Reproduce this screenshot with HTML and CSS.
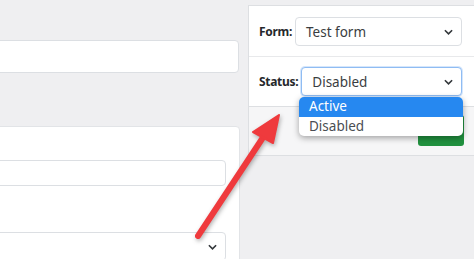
FILE: index.html
```html
<!DOCTYPE html>
<html lang="en">
<head>
    <meta charset="UTF-8">
    <meta name="viewport" content="width=device-width, initial-scale=1.0">
    <title>Form status</title>
    <link rel="stylesheet" href="styles.css">
</head>
<body>
    <div class="page">
        <!-- left side, cut off by the screenshot -->
        <div class="left-col">
            <input class="field top-field" type="text">
            <div class="card">
                <input class="field card-field" type="text">
                <div class="select card-select">
                    <span></span>
                    <svg class="chev" viewBox="0 0 10 6"><path d="M1 1l4 4 4-4"/></svg>
                </div>
            </div>
        </div>

        <!-- settings panel -->
        <div class="panel">
            <div class="row">
                <label>Form:</label>
                <div class="select">
                    <span>Test form</span>
                    <svg class="chev" viewBox="0 0 10 6"><path d="M1 1l4 4 4-4"/></svg>
                </div>
            </div>
            <div class="row status-row">
                <label>Status:</label>
                <div class="select focused">
                    <span>Disabled</span>
                    <svg class="chev" viewBox="0 0 10 6"><path d="M1 1l4 4 4-4"/></svg>
                </div>
                <ul class="options">
                    <li class="active">Active</li>
                    <li>Disabled</li>
                </ul>
            </div>
            <div class="panel-footer">
                <button class="save">Save</button>
            </div>
        </div>
    </div>

    <!-- red annotation arrow -->
    <svg class="arrow" width="474" height="259" viewBox="0 0 474 259">
        <line x1="198" y1="236" x2="262" y2="139" />
        <polygon points="279,115 253,132 273,143" />
    </svg>
</body>
</html>
```

FILE: styles.css
```css
body{
    margin: 0;
    background-color: #efeff1;
    font-family: "Noto Sans", "Open Sans", sans-serif;
    overflow: hidden;
    height: 259px;
}
.page{
    display: flex;
    gap: 8px;
}
.left-col{
    width: 240px;
    flex-shrink: 0;
    display: flex;
    flex-direction: column;
    padding-top: 40px;
}
.field{
    display: block;
    box-sizing: border-box;
    border: 1px solid #dcdfe3;
    border-radius: 4px;
    background: #fff;
    padding: 0;
}
.top-field{
    margin-left: -20px;
    width: 259px;
    height: 33px;
}
.card{
    margin-top: 53px;
    margin-left: -20px;
    background: #fff;
    border: 1px solid #e2e4e7;
    border-radius: 4px;
    padding: 33px 15px 0 0;
    height: 200px;
}
.card-field{
    width: 245px;
    height: 26px;
}
.select{
    box-sizing: border-box;
    height: 29px;
    flex: 1;
    display: flex;
    align-items: center;
    justify-content: space-between;
    border: 1px solid #dcdfe3;
    border-radius: 4px;
    background: #fff;
    padding: 0 8px 0 10px;
    font-size: 13.5px;
    color: #3a3d41;
}
.card-select{
    margin-top: 46px;
    width: 245px;
}
.chev{
    width: 9px;
    height: 6px;
    fill: none;
    stroke: #33373b;
    stroke-width: 1.8;
}
.panel{
    flex: 1;
    margin-top: 5px;
    align-self: flex-start;
    background: #fff;
    border: 1px solid #dddfe2;
    border-right: none;
}
.row{
    display: flex;
    align-items: center;
    gap: 3px;
    padding: 11px 12px 10px 10px;
    border-bottom: 1px solid #e8e9eb;
}
.status-row{
    position: relative;
    padding-top: 10px;
    padding-bottom: 10px;
    border-bottom: none;
}
label{
    font-size: 12px;
    letter-spacing: -0.3px;
    font-weight: bold;
    color: #25282b;
}
.focused{
    border-color: #8fbcf3;
    box-shadow: 0 0 0 1px #d5e6fb;
}
.options{
    position: absolute;
    left: 50px;
    right: 11px;
    top: 40px;
    margin: 0;
    padding: 0;
    list-style: none;
    background: #fff;
    border-radius: 5px;
    box-shadow: 0 2px 6px rgba(0,0,0,0.35);
    overflow: hidden;
    font-size: 13.5px;
    color: #4a4d52;
    z-index: 2;
}
.options li{
    height: 19.5px;
    line-height: 19.5px;
    padding-left: 10px;
}
.options .active{
    background: #2688f0;
    color: #fff;
}
.panel-footer{
    display: flex;
    justify-content: flex-end;
    padding: 8px 10px 9px 0;
    background: #f6f6f7;
    border-top: 1px solid #dddfe2;
}
.save{
    width: 46px;
    height: 31px;
    border: none;
    border-radius: 3px;
    background: #21913f;
    color: #fff;
    font-family: inherit;
    font-size: 12px;
    padding: 0 0 14px;
}
.arrow{
    position: absolute;
    left: 0;
    top: 0;
    pointer-events: none;
    filter: drop-shadow(1px 2px 2px rgba(0,0,0,0.3));
}
.arrow line{
    stroke: #ef3a3d;
    stroke-width: 6;
    stroke-linecap: round;
}
.arrow polygon{
    fill: #ef3a3d;
    stroke: #ef3a3d;
    stroke-width: 2;
    stroke-linejoin: round;
}
```
